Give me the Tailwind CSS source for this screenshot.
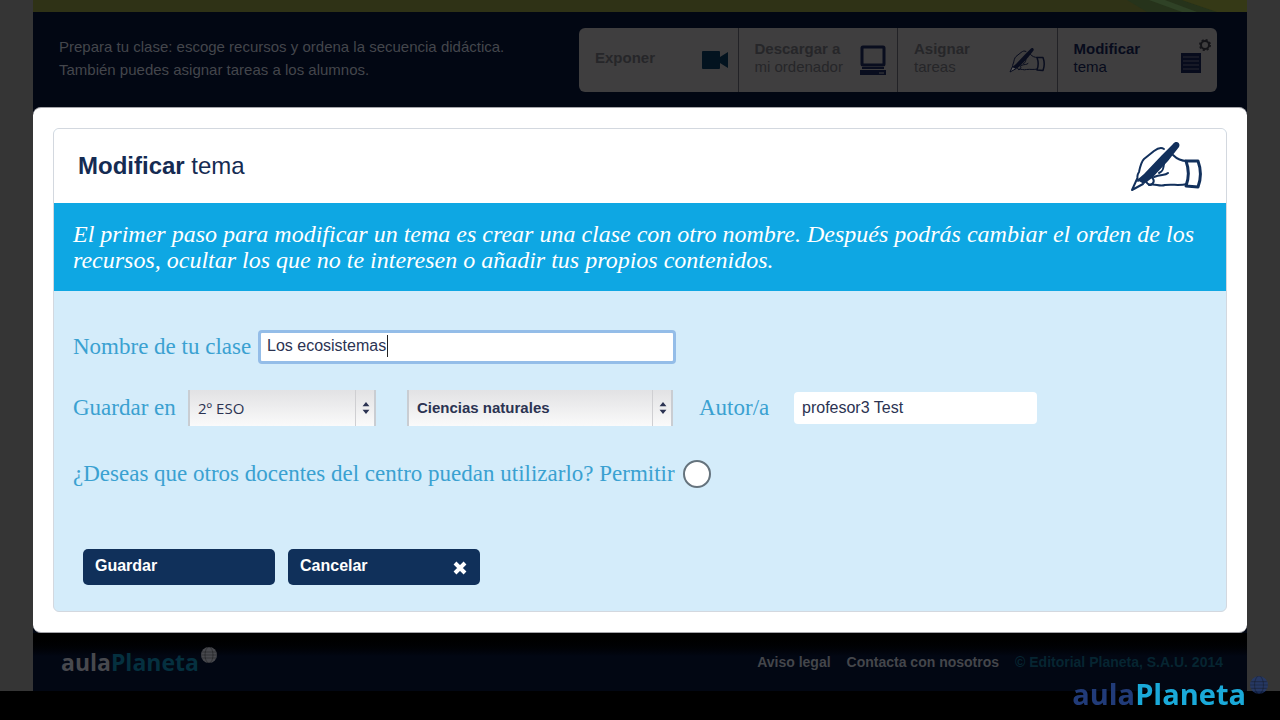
<!DOCTYPE html>
<html lang="es">
<head>
  <meta charset="utf-8"/>
  <meta name="viewport" content="width=device-width,initial-scale=1.0"/>
  <title>aulaPlaneta - Modificar tema</title>
  <script src="https://cdn.jsdelivr.net/npm/@tailwindcss/browser@4"></script>
</head>
<body class="bg-black font-['Liberation_Sans',Arial,sans-serif]">
  <!-- Iconos compartidos -->
  <svg class="hidden" aria-hidden="true">
    <symbol id="mano" viewBox="0 0 72 52">
      <g fill="none" stroke="currentColor" stroke-width="2" stroke-linejoin="round" stroke-linecap="round">
        <path d="M34 9C31 7 28 8 24 11L14 19C11 22 10 27 9 32C7 35 7 38 8 41"/>
        <path d="M43 15C47 19 51 21 57 21"/>
        <path d="M19 45C25 43 29 47 35 45C43 44 49 46 57 44"/>
        <path d="M24 37C31 34 35 36 38 33M34 24C33 28 34 31 29 33"/>
        <path d="M20 36C25 39 25 43 20 45C15 43 15 39 18 36"/>
        <path d="M56 21L68 21C71 29 71 39 68 47L56 46C59 38 59 29 56 21Z" stroke-width="3"/>
        <path d="M7 39L2 50L13 44" fill="#fff" fill-opacity=".15"/>
      </g>
      <path d="M43 4C46 0 51 3 49 7L38 21L22 38L14 44L7 40L14 34L32 15Z" fill="currentColor"/>
    </symbol>
    <symbol id="globo" viewBox="0 0 16 16">
      <circle cx="8" cy="8" r="8" fill="currentColor"/>
      <g fill="none" stroke="#000" stroke-opacity=".3">
        <path d="M1 5h14M0 8h16M1 11h14"/>
        <ellipse cx="8" cy="8" rx="4" ry="8"/>
      </g>
    </symbol>
    <symbol id="flechas" viewBox="0 0 8 14">
      <path d="M4 0l4 5H0zM4 14l4-5H0z" fill="currentColor"/>
    </symbol>
  </svg>

  <div class="bg-[#353535] px-[33px]">
    <div class="bg-[#020713]">
      <div class="h-3 bg-[#2f3216] flex justify-end">
        <svg class="h-3 w-[150px]" viewBox="0 0 150 12" preserveAspectRatio="none">
          <path d="M30 0H85L120 12H50Z" fill="#26331b"/>
          <path d="M52 0H68L100 12H85Z" fill="#2f4226"/>
          <path d="M85 0H150V12H120Z" fill="#353916"/>
        </svg>
      </div>

      <header class="flex justify-between items-center h-[95px] pl-[26px] pr-[30px]">
        <p class="text-[15px] leading-[23px] text-[#44464c] pb-1">Prepara tu clase: escoge recursos y ordena la secuencia didáctica.<br>También puedes asignar tareas a los alumnos.</p>
        <nav class="grid grid-cols-4 w-[638px] h-16 bg-[#3f3e3f] rounded-md overflow-hidden text-[15px] leading-[18px] text-[#262629]">
          <button class="flex items-center justify-between pl-4 pr-[10px] text-left border-r border-[#222226]">
            <span class="font-bold pb-1">Exponer</span>
            <svg class="w-[26px] h-[18px] text-[#03131f]" viewBox="0 0 26 18"><path d="M1 0h16q1 0 1 1v5l8-5v16l-8-5v5q0 1-1 1H1q-1 0-1-1V1q0-1 1-1z" fill="currentColor"/></svg>
          </button>
          <button class="flex items-center justify-between pl-4 pr-[10px] text-left border-r border-[#222226]">
            <span class="pb-1 whitespace-nowrap"><b>Descargar a</b><br>mi ordenador</span>
            <svg class="shrink-0 w-7 h-[30px] text-[#090d1e]" viewBox="0 0 28 30">
              <rect x="3" y="2" width="22" height="18" rx="1" fill="none" stroke="currentColor" stroke-width="3"/>
              <path d="M3 22h22v2H3zM1 25h26v5H1z" fill="currentColor"/>
              <path d="M20 28h5" stroke="#3f3e3f"/>
            </svg>
          </button>
          <button class="flex items-center justify-between pl-4 pr-[12px] text-left border-r border-[#222226]">
            <span class="pb-1"><b>Asignar</b><br>tareas</span>
            <svg class="w-9 h-[26px] text-[#090d1e]"><use href="#mano"/></svg>
          </button>
          <button class="flex items-center justify-between pl-4 pr-1 text-left text-[#070b1c]">
            <span class="pb-1"><b>Modificar</b><br>tema</span>
            <svg class="w-8 h-9 mb-2" viewBox="0 0 32 36">
              <path d="M0 15h20v20H0z" fill="currentColor"/>
              <path d="M2 19h16M2 23h16M2 27h16M2 31h16" stroke="#3f3e3f" stroke-opacity=".6"/>
              <g fill="none" stroke="#151519">
                <circle cx="24" cy="7" r="4" stroke-width="2"/>
                <circle cx="24" cy="7" r="5" stroke-width="2" stroke-dasharray="2 1.93"/>
              </g>
            </svg>
          </button>
        </nav>
      </header>

      <main class="bg-white rounded-lg p-5 border-y border-[#a5a5aa]">
        <form class="border border-[#d3d8df] rounded-md overflow-hidden bg-[#d4ecfa]" onsubmit="return false">
          <div class="flex items-center justify-between h-[74px] bg-white pl-6 pr-6">
            <h1 class="text-[24px] text-[#152b52]"><b>Modificar</b> tema</h1>
            <svg class="w-[72px] h-[52px] text-[#12305c]"><use href="#mano"/></svg>
          </div>
          <p class="h-[88px] bg-[#0ea7e3] px-[19px] pt-[18px] text-white font-['Liberation_Serif',serif] italic text-[24px] leading-[26px]">El primer paso para modificar un tema es crear una clase con otro nombre. Después podrás cambiar el orden de los recursos, ocultar los que no te interesen o añadir tus propios contenidos.</p>

          <div class="px-[19px] pt-[38px] pb-[26px] text-[#3aa1d1] font-['Liberation_Serif',serif] text-[23px]">
            <div class="flex items-center gap-[10px] h-9">
              <label for="nombre" class="w-[175px] whitespace-nowrap">Nombre de tu clase</label>
              <div class="relative">
                <input id="nombre" type="text" value="Los ecosistemas" class="block w-[418px] h-[34px] bg-white border-3 border-[#94bde8] rounded-sm px-[6px] pb-[2px] font-['Liberation_Sans',Arial,sans-serif] text-[16px] text-[#2b3352] outline-none"/>
                <span class="absolute left-[129px] top-[5px] w-px h-[22px] bg-[#222]"></span>
              </div>
            </div>

            <div class="flex items-center h-9 mt-[25px] font-['Liberation_Sans',Arial,sans-serif] text-[16px] text-[#2b3352]">
              <label for="curso" class="w-[115px] whitespace-nowrap font-['Liberation_Serif',serif] text-[23px] text-[#3aa1d1]">Guardar en</label>
              <div class="relative">
                <select id="curso" class="block appearance-none w-[188px] h-9 pl-2 border-x-2 border-[#c9cdd2] bg-linear-to-b from-[#e2e2e4] to-[#fafafa] font-['Open_Sans',sans-serif] text-[15px]">
                  <option>2º ESO</option>
                </select>
                <span class="absolute right-[6px] top-0 h-9 w-[15px] border-l border-[#cfcfd2] flex items-center justify-end pointer-events-none"><svg class="w-2 h-3"><use href="#flechas"/></svg></span>
              </div>
              <div class="relative ml-[31px]">
                <select id="materia" aria-label="Materia" class="block appearance-none w-[266px] h-9 pl-2 border-x-2 border-[#c9cdd2] bg-linear-to-b from-[#e2e2e4] to-[#fafafa] font-bold text-[15px]">
                  <option>Ciencias naturales</option>
                </select>
                <span class="absolute right-[6px] top-0 h-9 w-[15px] border-l border-[#cfcfd2] flex items-center justify-end pointer-events-none"><svg class="w-2 h-3"><use href="#flechas"/></svg></span>
              </div>
              <label for="autor" class="ml-[26px] w-[95px] font-['Liberation_Serif',serif] text-[23px] text-[#3aa1d1]">Autor/a</label>
              <input id="autor" type="text" value="profesor3 Test" class="w-[243px] h-8 bg-white rounded-sm px-2 outline-none"/>
            </div>

            <div class="flex items-center gap-2 h-9 mt-[30px]">
              <label for="permitir" class="whitespace-nowrap">¿Deseas que otros docentes del centro puedan utilizarlo? Permitir</label>
              <input id="permitir" type="checkbox" class="appearance-none w-7 h-7 rounded-full bg-white border-2 border-[#65737d] checked:bg-[#12305c]"/>
            </div>

            <div class="flex gap-[13px] mt-[57px] ml-[10px] font-['Liberation_Sans',Arial,sans-serif] font-bold text-[16px] text-white">
              <button type="submit" class="flex items-center justify-between w-[192px] h-9 px-3 pb-[2px] bg-[#10305a] rounded-[5px]">Guardar</button>
              <button type="button" class="flex items-center justify-between w-[192px] h-9 px-3 pb-[2px] bg-[#10305a] rounded-[5px]">
                Cancelar
                <svg class="w-4 h-4 mt-1" viewBox="0 0 16 16"><path d="M3 3l10 10M13 3L3 13" stroke="currentColor" stroke-width="4"/></svg>
              </button>
            </div>
          </div>
        </form>
      </main>

      <footer class="flex justify-between items-center h-[58px] pl-7 pr-6 bg-linear-to-b from-black to-[#020713] to-40%">
        <div class="flex items-start font-['Open_Sans',sans-serif] font-bold text-[23px] leading-[30px] text-[#48494e]">
          aula<span class="text-[#05303f]">Planeta</span>
          <svg class="w-4 h-4 ml-[2px]"><use href="#globo"/></svg>
        </div>
        <div class="flex gap-4 font-bold text-[14px]">
          <a href="#" class="text-[#44464b]">Aviso legal</a>
          <a href="#" class="text-[#44464b]">Contacta con nosotros</a>
          <span class="text-[#062531]">© Editorial Planeta, S.A.U. 2014</span>
        </div>
      </footer>
    </div>
  </div>

  <!-- Marca de agua -->
  <div class="fixed right-3 bottom-2 flex items-start font-['Open_Sans',sans-serif] font-bold text-[29px] leading-[36px] text-[#213b78]">
    aula<span class="text-[#1aa9d8]">Planeta</span>
    <svg class="w-[18px] h-[18px] ml-1 opacity-70"><use href="#globo"/></svg>
  </div>
</body>
</html>
